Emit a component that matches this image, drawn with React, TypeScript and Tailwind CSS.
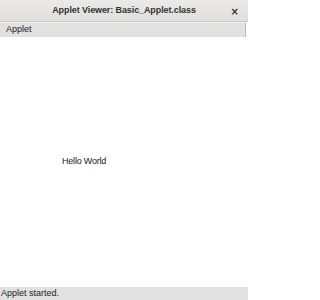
export default function App() {
  return (
    <div className="flex h-[300px] w-[248px] flex-col bg-white font-['Liberation_Sans',Arial,sans-serif]">
      <div className="relative flex h-[22px] shrink-0 items-center justify-center border-b border-[#c8c6c2] bg-gradient-to-b from-[#eceae7] to-[#e1dfdb]">
        <span className="text-[9px] font-bold tracking-[-0.1px] text-[#2e3436]">Applet Viewer: Basic_Applet.class</span>
        <span className="absolute right-[9px] top-[4px] font-['DejaVu_Sans',sans-serif] text-[10px] font-bold text-[#2e3436]">×</span>
      </div>
      <div className="flex h-[15px] w-[246px] shrink-0 items-center border-r border-t border-[#f4f4f4] border-r-[#b8b8b8] bg-[#e1e1e1] pl-[6px]">
        <span className="text-[9px] text-[#222]">Applet</span>
      </div>
      <div className="flex-1 pl-[62px] pt-[110px]">
        <span className="text-[9px] tracking-[-0.2px] text-[#222]">Hello World</span>
      </div>
      <div className="flex h-[13px] shrink-0 items-center bg-[#e1e1e1] pl-[1px]">
        <span className="text-[9px] text-[#222]">Applet started.</span>
      </div>
    </div>
  )
}
